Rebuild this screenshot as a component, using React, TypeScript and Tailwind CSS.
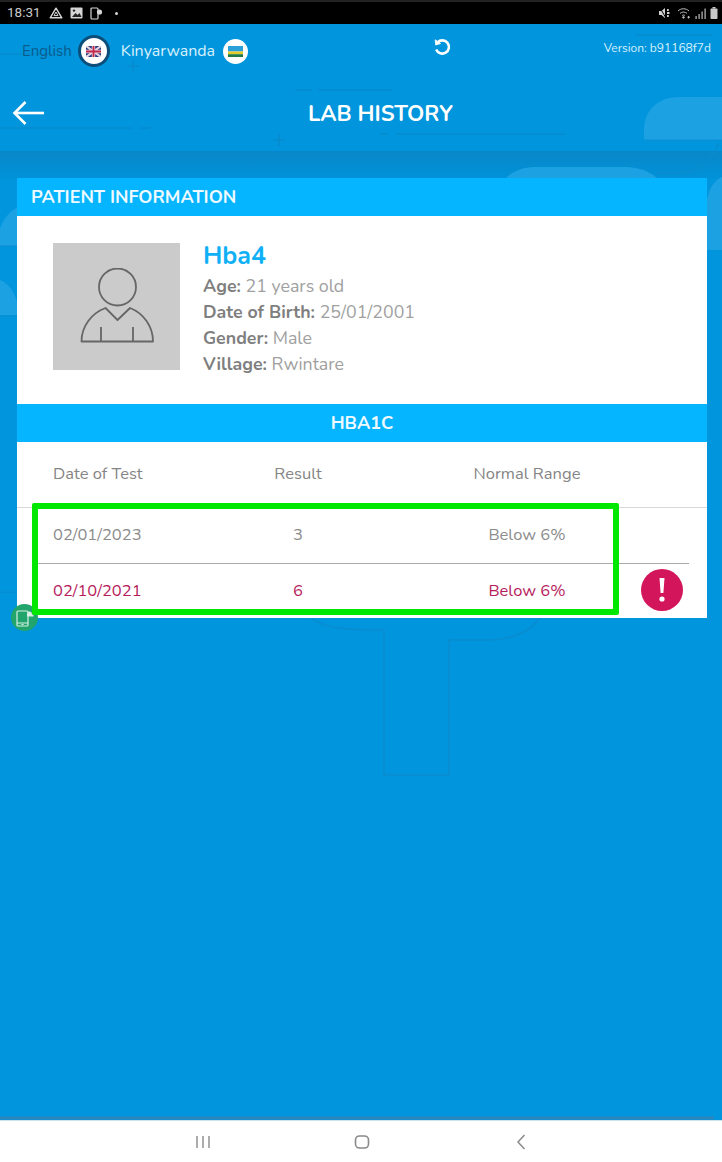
import React from "react";

const font = { fontFamily: '"Nunito", Lato, "Noto Sans", sans-serif' };

function Background() {
  return (
    <svg className="absolute inset-0" width="722" height="1162" viewBox="0 0 722 1162" fill="none">
      <defs>
        <linearGradient id="band" x1="0" y1="0" x2="0" y2="1">
          <stop offset="0" stopColor="#0a87c9" />
          <stop offset="1" stopColor="#0092d8" />
        </linearGradient>
      </defs>
      <rect x="0" y="151" width="722" height="28" fill="url(#band)" />
      <path d="M644 140V130C644 110 658 97 680 97H722V140Z" fill="#1ca1e3" />
      <path d="M644 140H722" stroke="#0e90d3" strokeWidth="1" />
      <path d="M719 143C712 160 700 172 680 173H655" stroke="#0a8ccf" strokeWidth="1.5" />
      <path d="M506 178C512 172 522 167 535 167H625C640 167 650 172 657 178Z" fill="#1ca1e3" />
      <path d="M706 205C708 190 714 180 722 177V250H706Z" fill="#1ca1e3" />
      <path d="M0 246V228C4 218 10 211 17 208V246Z" fill="#1ca1e3" />
      <path d="M0 315V280C8 283 14 291 17 302V315Z" fill="#1ca1e3" />
      <path d="M0 246H17M0 316H17" stroke="#0a8ccf" />
      <path d="M0 54H60M0 128H132M140 128H150M295 90H312M318 90H392M380 134H388M396 134H566M636 35H712" stroke="#0b86c6" strokeWidth="1" />
      <path d="M133 60V72M127 66H139M279 134V146M273 140H285" stroke="#0b86c6" strokeWidth="1" />
      <path d="M311 618C325 628 340 630 384 630V775H449V640H490C510 640 530 632 540 618" stroke="#0a8ccf" strokeWidth="1.5" />
      <path d="M0 592H17" stroke="#0a8ccf" />
      <path d="M0 1118H714" stroke="#2c86bb" strokeWidth="3" />
    </svg>
  );
}

function StatusBar() {
  return (
    <div className="relative flex h-6 items-center justify-between border-t-2 border-[#222222] bg-black pl-[7px] pr-[4px] text-[#c9c9c9]">
      <div className="flex items-center">
        <span className="text-[13.5px] leading-none" style={{ fontFamily: "Roboto, sans-serif" }}>18:31</span>
        <svg className="ml-2" width="14" height="12" viewBox="0 0 14 12" fill="none" stroke="#d5d5d5" strokeWidth="1.4">
          <path d="M7 1.2 12.8 10.8H1.2Z" strokeLinejoin="round" />
          <path d="M7 5 9 8.6H5Z" strokeWidth="1" />
        </svg>
        <svg className="ml-[7px]" width="13" height="12" viewBox="0 0 13 12">
          <rect x="0.5" y="0.5" width="12" height="11" rx="1" fill="#d5d5d5" />
          <circle cx="4" cy="3.6" r="1.2" fill="#222" />
          <path d="M2 10 5.5 6 7.5 8 9.5 6 11.5 10Z" fill="#222" />
        </svg>
        <svg className="ml-[7px]" width="13" height="13" viewBox="0 0 13 13" fill="none" stroke="#d5d5d5" strokeWidth="1.2">
          <rect x="1" y="1" width="7" height="11" rx="1" />
          <circle cx="9.5" cy="5" r="2.6" fill="#d5d5d5" stroke="none" />
        </svg>
        <span className="ml-[12px] h-[3px] w-[3px] rounded-full bg-[#d5d5d5]" />
      </div>
      <div className="flex items-center gap-[3px]">
        <svg width="12" height="12" viewBox="0 0 12 12" fill="#d0d0d0">
          <path d="M0 4H2.5L6 1V11L2.5 8H0Z" />
          <path d="M1 1 7 11" stroke="#000" strokeWidth="1" />
          <path d="M8 2H9.8V4H8ZM8 5H10.5V7H8ZM8 8H9.8V10H8Z" />
        </svg>
        <svg className="ml-[3px]" width="15" height="12" viewBox="0 0 15 12" fill="none" stroke="#bdbdbd" strokeWidth="1">
          <path d="M1 4C4 1 9 1 12 4M3 6.4C5 4.6 8 4.6 10 6.4M5 8.6C6 7.8 7 7.8 8 8.6" />
          <circle cx="6.5" cy="10.4" r="0.8" fill="#bdbdbd" />
          <path d="M11.5 9V11.5M10.4 10.2H13" />
        </svg>
        <svg width="11" height="11" viewBox="0 0 11 11" fill="#bdbdbd">
          <rect x="0.5" y="8" width="1.2" height="3" />
          <rect x="3.5" y="6" width="1.2" height="5" />
          <rect x="6.5" y="3.5" width="1.2" height="7.5" />
          <rect x="9.5" y="0.5" width="1.2" height="10.5" />
        </svg>
        <svg className="ml-[1px]" width="8" height="12" viewBox="0 0 8 12" fill="#c9c9c9">
          <rect x="2.5" y="0" width="3" height="1.5" />
          <rect x="0.5" y="1.5" width="7" height="10.5" rx="0.8" />
        </svg>
      </div>
    </div>
  );
}

function UkFlag() {
  return (
    <svg className="shrink-0" width="15" height="11" viewBox="0 0 15 11">
      <rect width="15" height="11" rx="2" fill="#2a3a80" />
      <path d="M0 0 15 11M15 0 0 11" stroke="#e6d3dc" strokeWidth="2.2" />
      <path d="M7.5 0V11M0 5.5H15" stroke="#e6d3dc" strokeWidth="3.4" />
      <path d="M7.5 0V11M0 5.5H15" stroke="#c2264a" strokeWidth="1.8" />
    </svg>
  );
}

function RwFlag() {
  return (
    <svg className="shrink-0" width="15" height="11" viewBox="0 0 15 11">
      <rect width="15" height="5.5" fill="#2a9fd8" />
      <rect y="5.5" width="15" height="2.7" fill="#e3cc2a" />
      <rect y="8.2" width="15" height="2.8" fill="#1f7a45" />
    </svg>
  );
}

function LanguageRow() {
  return (
    <div className="flex h-[54px] items-center pl-[22px] pr-[11px]">
      <span className="shrink-0 text-[15px] text-[#0b5c8e]">English</span>
      <span className="ml-[6px] flex h-8 w-8 shrink-0 items-center justify-center rounded-full border-[3px] border-[#0c4e79] bg-white">
        <UkFlag />
      </span>
      <span className="ml-[11px] shrink-0 text-[16px] text-[#d8f1fd]">Kinyarwanda</span>
      <span className="ml-[8px] flex h-[25px] w-[25px] shrink-0 items-center justify-center rounded-full bg-white">
        <RwFlag />
      </span>
      <svg className="ml-[184px] shrink-0 -translate-y-[4px]" width="20" height="20" viewBox="0 0 20 20" fill="none" stroke="white" strokeWidth="2.6">
        <path d="M5.5 5.5A6.6 6.6 0 1 1 4.2 12.5" />
        <path d="M3.2 2.8 3.6 8 8.6 6.6Z" fill="white" strokeWidth="0.8" />
      </svg>
      <span className="ml-auto shrink-0 -translate-y-[3px] text-[12px] text-[#d8f1fd]">Version: b91168f7d</span>
    </div>
  );
}

function TitleRow() {
  return (
    <div className="relative flex h-[73px] items-center justify-center pl-[39px]">
      <svg className="absolute left-[12px] top-[22px]" width="33" height="26" viewBox="0 0 33 26" fill="none" stroke="white" strokeWidth="2.6">
        <path d="M32 13H3" />
        <path d="M13.5 2 2.5 13 13.5 24" />
      </svg>
      <h1 className="text-[22px] font-bold text-white">LAB HISTORY</h1>
    </div>
  );
}

function Avatar() {
  return (
    <div className="flex h-[127px] w-[127px] shrink-0 items-center justify-center bg-[#cbcbcb]">
      <svg width="74" height="78" viewBox="0 0 74 78" fill="none" stroke="#666666" strokeWidth="1.8">
        <circle cx="37.5" cy="19" r="18.5" />
        <path d="M1.5 73.5H73C73 58 63 45 50 40L37.5 52 25.5 40C12 45 1.5 58 1.5 73.5Z" strokeLinejoin="round" />
        <path d="M21 59V73.5M53 59V73.5" />
      </svg>
    </div>
  );
}

function InfoLine({ label, value }: { label: string; value: string }) {
  return (
    <p className="h-[26px] text-[17.8px] leading-[26px] text-[#a0a0a0]">
      <span className="font-bold text-[#7f7f7f]">{label}</span> {value}
    </p>
  );
}

function Row({ date, result, range, alert }: { date: string; result: string; range: string; alert?: boolean }) {
  const tone = alert ? "text-[#b71c5c]" : "text-[#8c8c8c]";
  return (
    <div className={`flex h-[55px] items-center pl-[36px] text-[16.5px] ${tone}`}>
      <span className="w-[205px] shrink-0">{date}</span>
      <span className="w-[80px] shrink-0 text-center">{result}</span>
      <span className="ml-[108px] w-[162px] shrink-0 text-center">{range}</span>
      {alert && (
        <span className="ml-[33px] flex h-[42px] w-[42px] shrink-0 -translate-y-[2px] items-center justify-center rounded-full bg-[#d3155c]">
          <svg width="6" height="24" viewBox="0 0 6 24" fill="white">
            <path d="M0.5 0H5.5L4.4 15H1.6Z" />
            <circle cx="3" cy="21" r="2.6" />
          </svg>
        </span>
      )}
    </div>
  );
}

function Card() {
  return (
    <div className="relative mx-[17px] mt-[27px] h-[440px] w-[690px] bg-white">
      <div className="flex h-[38px] items-center bg-[#05b5ff] pl-[14px] text-[18px] font-bold text-[#eefaff]">PATIENT INFORMATION</div>
      <div className="flex h-[188px] items-start pl-[36px] pt-[27px]">
        <Avatar />
        <div className="ml-[23px]">
          <h2 className="mb-[3px] h-[27px] text-[25px] font-bold leading-[27px] text-[#0fb0f5]">Hba4</h2>
          <InfoLine label="Age:" value="21 years old" />
          <InfoLine label="Date of Birth:" value="25/01/2001" />
          <InfoLine label="Gender:" value="Male" />
          <InfoLine label="Village:" value="Rwintare" />
        </div>
      </div>
      <div className="flex h-[38px] items-center justify-center bg-[#05b5ff] text-[18px] font-bold text-[#eefaff]">HBA1C</div>
      <div className="flex h-[66px] items-center border-b border-[#d8d8d8] pb-[1px] pl-[36px] text-[16.5px] text-[#858585]">
        <span className="w-[205px] shrink-0">Date of Test</span>
        <span className="w-[80px] shrink-0 text-center">Result</span>
        <span className="ml-[108px] w-[162px] shrink-0 text-center">Normal Range</span>
      </div>
      <Row date="02/01/2023" result="3" range="Below 6%" />
      <div className="ml-[17px] mr-[18px] border-t border-[#ababab]" />
      <Row date="02/10/2021" result="6" range="Below 6%" alert />
      <span className="absolute -left-[6px] top-[426px] flex h-[27px] w-[27px] items-center justify-center rounded-full bg-[#22a56c]">
        <svg width="21" height="21" viewBox="0 0 21 21" fill="none" stroke="#d8efe6" strokeWidth="1.2">
          <rect x="3" y="4" width="11" height="15" rx="1" />
          <path d="M3 16H14M7.5 17.5H9.5" />
          <path d="M13 7.5C13 5.5 14 4.5 15.5 4.5S18 5.5 18 7.5H19.5V9.5H13Z" fill="#d8efe6" stroke="none" />
        </svg>
      </span>
      <div className="absolute left-[15px] top-[325px] h-[112px] w-[587px] rounded-[2px] border-[6px] border-[#00e800]" />
    </div>
  );
}

function NavBar() {
  return (
    <div className="absolute inset-x-0 bottom-0 flex h-[42px] items-center border-t border-[#cfe3ee] bg-white pl-[196px]">
      <svg width="14" height="14" viewBox="0 0 14 14" fill="none" stroke="#8a8a8a" strokeWidth="1.4">
        <path d="M1 1V13M7 1V13M13 1V13" />
      </svg>
      <svg className="ml-[144px]" width="16" height="14" viewBox="0 0 16 14" fill="none" stroke="#8a8a8a" strokeWidth="1.6">
        <rect x="1.5" y="1" width="13" height="12" rx="4" />
      </svg>
      <svg className="ml-[146px]" width="10" height="16" viewBox="0 0 10 16" fill="none" stroke="#8a8a8a" strokeWidth="1.5">
        <path d="M8.5 1 2 8 8.5 15" />
      </svg>
    </div>
  );
}

export default function App() {
  return (
    <div className="relative h-[1162px] w-[722px] overflow-hidden bg-[#0095dc]" style={font}>
      <Background />
      <div className="relative">
        <StatusBar />
        <LanguageRow />
        <TitleRow />
        <Card />
      </div>
      <NavBar />
    </div>
  );
}
